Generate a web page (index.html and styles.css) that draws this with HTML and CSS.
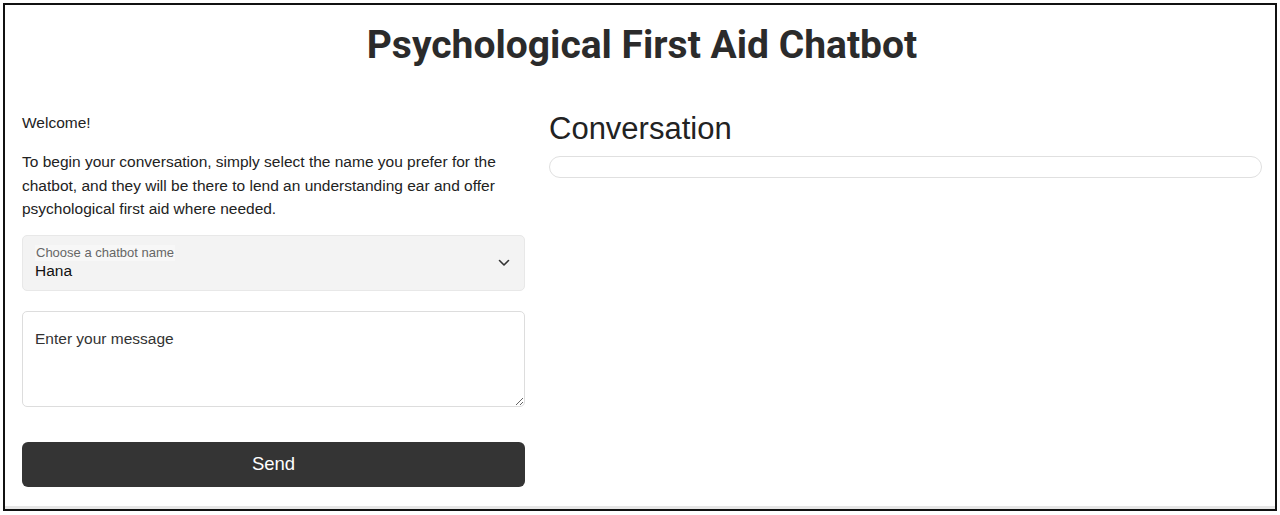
FILE: index.html
```html
<!DOCTYPE html>
<html>
<head>
<meta charset="utf-8">
<link rel="stylesheet" href="styles.css">
</head>
<body>
<div class="frame">
  <h1 class="title">Psychological First Aid Chatbot</h1>
  <div class="columns">
    <div class="left">
      <p class="welcome">Welcome!</p>
      <p class="intro">To begin your conversation, simply select the name you prefer for the chatbot, and they will be there to lend an understanding ear and offer psychological first aid where needed.</p>
      <div class="select">
        <div class="select-text">
          <span class="select-label">Choose a chatbot name</span>
          <span class="select-value">Hana</span>
        </div>
        <svg class="chevron" width="12" height="8" viewBox="0 0 12 8"><path d="M1.5 1.5 L6 6 L10.5 1.5" fill="none" stroke="#333" stroke-width="1.6" stroke-linecap="round" stroke-linejoin="round"/></svg>
      </div>
      <textarea class="message" placeholder="Enter your message"></textarea>
      <button class="send">Send</button>
    </div>
    <div class="right">
      <h2 class="conv-title">Conversation</h2>
      <div class="conv-box"></div>
    </div>
  </div>
</div>
</body>
</html>
```

FILE: styles.css
```css
html, body {
  margin: 0;
  padding: 0;
  background: #ffffff;
}
body {
  padding: 3px;
  font-family: "Liberation Sans", Arial, sans-serif;
  color: #222;
}
.frame {
  box-sizing: border-box;
  width: 1274px;
  height: 508px;
  border: 2px solid #111;
  box-shadow: inset 0 -3px 0 #e6e6e6;
  padding: 0 13px 0 17px;
}
.title {
  margin: 0;
  padding-top: 18px;
  height: 60px;
  box-sizing: border-box;
  font-family: Roboto, "Liberation Sans", sans-serif;
  font-weight: 700;
  font-size: 39px;
  line-height: 44px;
  text-align: center;
  color: #2b2b2b;
}
.columns {
  display: grid;
  grid-template-columns: 503px 713px;
  column-gap: 24px;
}
.left {
  padding-top: 48px;
}
.welcome {
  margin: 0 0 17px;
  font-size: 15.5px;
  line-height: 20px;
  color: #222;
}
.intro {
  margin: 0 0 14px;
  font-size: 15.5px;
  line-height: 23.5px;
  color: #222;
}
.select {
  box-sizing: border-box;
  height: 56px;
  background: #f3f3f3;
  border: 1px solid #e8e8e8;
  border-radius: 5px;
  display: flex;
  align-items: center;
  padding: 0 14px 0 12px;
}
.select-text {
  flex: 1;
  display: flex;
  flex-direction: column;
  align-items: flex-start;
  padding-top: 0;
}
.select-label {
  font-size: 13px;
  line-height: 16px;
  color: #666;
  background: #f7f7f7;
  padding: 0 1px;
}
.select-value {
  font-size: 15.5px;
  line-height: 19px;
  color: #111;
}
.chevron {
  display: block;
}
.message {
  display: block;
  box-sizing: border-box;
  width: 503px;
  height: 96px;
  margin-top: 20px;
  padding: 17px 12px;
  border: 1px solid #ddd;
  border-radius: 5px;
  font-family: "Liberation Sans", Arial, sans-serif;
  font-size: 15.5px;
  line-height: 19px;
  resize: vertical;
}
.message::placeholder {
  color: #333;
  opacity: 1;
}
.send {
  display: block;
  width: 503px;
  height: 45px;
  margin-top: 35px;
  border: none;
  border-radius: 6px;
  background: #343434;
  color: #fff;
  font-family: "Liberation Sans", Arial, sans-serif;
  font-size: 18.5px;
}
.right {
  padding-top: 46px;
}
.conv-title {
  margin: 0;
  font-weight: 400;
  font-size: 31px;
  line-height: 36px;
  color: #222;
}
.conv-box {
  box-sizing: border-box;
  margin-top: 9px;
  height: 22px;
  border: 1px solid #e0e0e0;
  border-radius: 11px;
}
```
